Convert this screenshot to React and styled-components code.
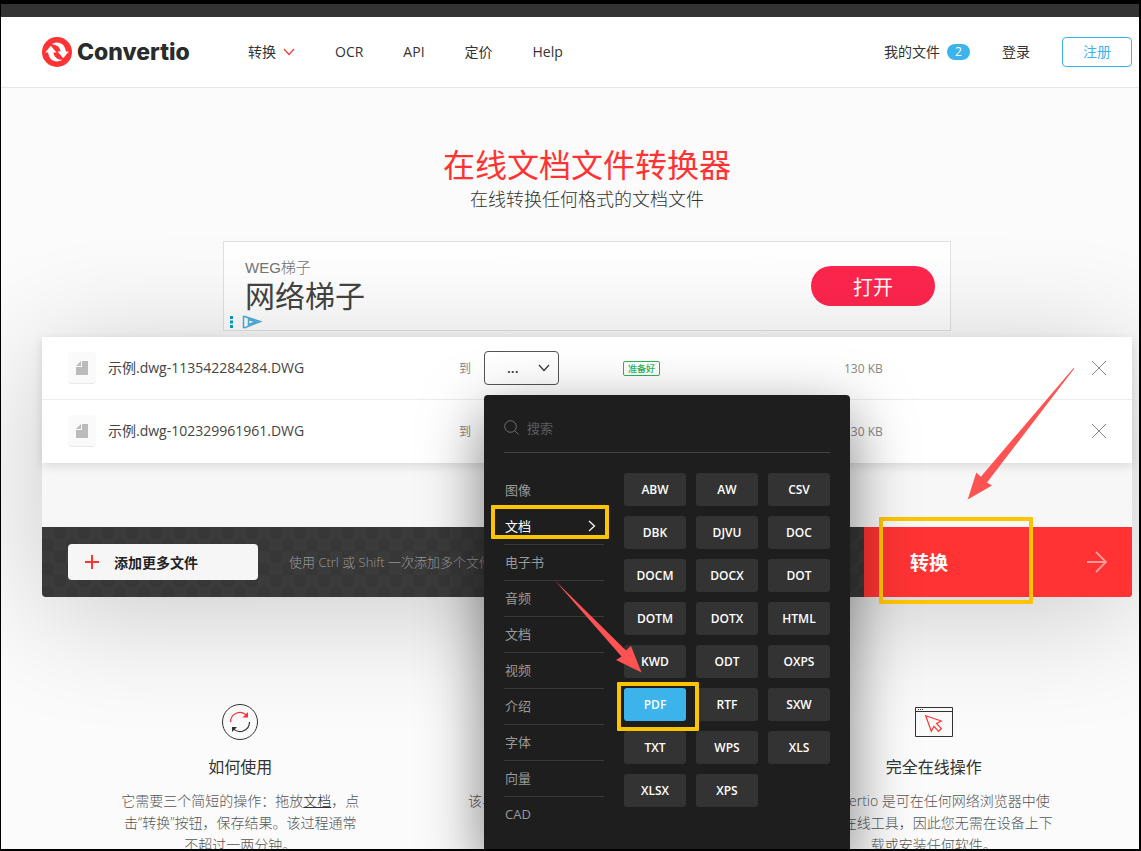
import { useState } from "react";
import styled, { createGlobalStyle } from "styled-components";

const colors = {
  red: "#ff3333",
  blue: "#3cb4eb",
  mark: "#ffc400",
  arrow: "#ff5353",
  dark: "#1e1e1e",
  text: "#333",
  green: "#2cb457",
};

const files = [
  { name: "示例.dwg-113542284284.DWG", size: "130 KB", status: "准备好" },
  { name: "示例.dwg-102329961961.DWG", size: "130 KB", status: "准备好" },
];

const categories = [
  "图像",
  "文档",
  "电子书",
  "音频",
  "文档",
  "视频",
  "介绍",
  "字体",
  "向量",
  "CAD",
];

const formats = [
  "ABW", "AW", "CSV",
  "DBK", "DJVU", "DOC",
  "DOCM", "DOCX", "DOT",
  "DOTM", "DOTX", "HTML",
  "KWD", "ODT", "OXPS",
  "PDF", "RTF", "SXW",
  "TXT", "WPS", "XLS",
  "XLSX", "XPS",
];

const Chevron = () => (
  <svg width="12" height="8" viewBox="0 0 12 8" fill="none" stroke="currentColor" strokeWidth="1.200">
    <path d="M1 1l5 5.500L11 1" />
  </svg>
);

const LogoMark = () => (
  <svg width="30" height="30" viewBox="0 0 30 30">
    <circle cx="15" cy="15" r="15" fill={colors.red} />
    <g fill="#fff">
      <path d="M8.800 8.800L3.200 15.400h3C6.400 20.500 10 24.400 15 24.400c2 0 3.800-.6 5.200-1.600C15.500 22.500 11.800 20 11.500 15.400h3z" />
      <path d="M21.200 21.200L26.800 14.600h-3C23.600 9.500 20 5.600 15 5.600c-2 0-3.800.6-5.200 1.600C14.500 7.500 18.200 10 18.500 14.600h-3z" />
    </g>
  </svg>
);

const DocIcon = () => (
  <svg width="12" height="14" viewBox="0 0 12 14" fill="#bbb">
    <path d="M6 0h6v14H0V6h6z" />
    <path d="M5 0v5H0z" />
  </svg>
);

const CloseIcon = () => (
  <svg width="14" height="14" viewBox="0 0 14 14" stroke="#888" fill="none">
    <path d="M0 0l14 14M14 0L0 14" />
  </svg>
);

const SearchIcon = () => (
  <svg width="15" height="15" viewBox="0 0 15 15" stroke="#6e6e6e" fill="none">
    <circle cx="6.500" cy="6.500" r="5.800" />
    <path d="M10.700 10.700l3.800 3.800" />
  </svg>
);

const FilesMenu = () => {
  const [category, setCategory] = useState(1);
  const [format, setFormat] = useState("PDF");

  return (
    <Menu>
      <SearchLabel>
        <SearchIcon />
        <SearchInput type="text" placeholder="搜索" aria-label="搜索" />
      </SearchLabel>
      <MenuBody>
        <CategoryList>
          {categories.map((c, i) => (
            <li key={i}>
              <Category active={i === category ? 1 : 0} onClick={() => setCategory(i)}>
                {c}
                {i === category && (
                  <svg width="8" height="12" viewBox="0 0 8 12" fill="none" stroke="#fff" strokeWidth="1.200">
                    <path d="M1 1l5.500 5L1 11" />
                  </svg>
                )}
                {i === 1 && <CategoryMark />}
              </Category>
            </li>
          ))}
        </CategoryList>
        <FormatGrid>
          {formats.map((f) => (
            <Format key={f} active={f === format ? 1 : 0} onClick={() => setFormat(f)}>
              {f}
              {f === "PDF" && (
                <>
                  <FormatMark />
                  <FormatArrow width="88" height="93" viewBox="0 0 88 93" fill={colors.arrow}>
                    <path d="M.5 0L72 70.500 77 66l10.500 26.500L62 80l5.500-3.500z" />
                  </FormatArrow>
                </>
              )}
            </Format>
          ))}
        </FormatGrid>
      </MenuBody>
    </Menu>
  );
};

const App = () => {
  return (
    <>
      <GlobalStyle />
      <Frame>
        <TopBar />
        <Header>
          <Logo href="#">
            <LogoMark />
            Convertio
          </Logo>
          <Nav>
            <NavLink href="#">
              转换
              <Red>
                <Chevron />
              </Red>
            </NavLink>
            <NavLink href="#">OCR</NavLink>
            <NavLink href="#">API</NavLink>
            <NavLink href="#">定价</NavLink>
            <NavLink href="#">Help</NavLink>
          </Nav>
          <Account>
            <NavLink href="#">
              我的文件
              <Count>2</Count>
            </NavLink>
            <NavLink href="#">登录</NavLink>
            <SignUp>注册</SignUp>
          </Account>
        </Header>

        <Main>
          <Title>在线文档文件转换器</Title>
          <Subtitle>在线转换任何格式的文档文件</Subtitle>

          <Ad>
            <div>
              <AdBrand>WEG梯子</AdBrand>
              <AdTitle>网络梯子</AdTitle>
            </div>
            <AdButton>打开</AdButton>
            <AdChoices width="34" height="14" viewBox="0 0 34 14">
              <path fill="#00a0c4" d="M2 1h3v3H2zM2 5.500h3v3H2zM2 10h3v3H2z" />
              <path
                fill="none"
                stroke="#4aaee0"
                strokeWidth="1.500"
                d="M18.500 1.500h-3v11h3M16.500 1.500L32.500 6.500l-14 5.500M20.500 4.500v5l7.500-2.700z"
              />
            </AdChoices>
          </Ad>

          <Card>
            <FileTable>
              <colgroup>
                <col />
                <col width="25" />
                <col width="139" />
                <col width="221" />
                <col width="248" />
                <col width="40" />
              </colgroup>
              <tbody>
                {files.map((file, i) => (
                  <tr key={file.name}>
                    <td>
                      <FileName>
                        <FileTile>
                          <DocIcon />
                        </FileTile>
                        <span>{file.name}</span>
                      </FileName>
                    </td>
                    <Muted>到</Muted>
                    <td>
                      <Picker>
                        <PickerButton aria-haspopup="true" aria-expanded={i === 0}>
                          <span>...</span>
                          <Chevron />
                        </PickerButton>
                        {i === 0 && <FilesMenu />}
                      </Picker>
                    </td>
                    <td>
                      <Status>{file.status}</Status>
                    </td>
                    <Muted>{file.size}</Muted>
                    <td>
                      <IconButton aria-label="删除">
                        <CloseIcon />
                      </IconButton>
                    </td>
                  </tr>
                ))}
              </tbody>
            </FileTable>
            <ActionBar>
              <AddButton>
                <svg width="14" height="14" viewBox="0 0 14 14" stroke={colors.red} strokeWidth="2">
                  <path d="M7 0v14M0 7h14" />
                </svg>
                添加更多文件
              </AddButton>
              <Hint>使用 Ctrl 或 Shift 一次添加多个文件</Hint>
              <ConvertButton>
                转换
                <svg width="20" height="22" viewBox="0 0 20 22" fill="none" stroke="#ff9c9c" strokeWidth="1.800">
                  <path d="M0 11h19M9 1l10 10L9 21" />
                </svg>
                <ConvertMark />
                <ConvertArrow width="108" height="132" viewBox="0 0 108 132" fill={colors.arrow}>
                  <path d="M106.500 0L107.300.5 20 114.500l5 3L.7 131.500 9.300 104.500l4.500 4.200z" />
                </ConvertArrow>
              </ConvertButton>
            </ActionBar>
          </Card>

          <Features>
            <Feature>
              <svg width="36" height="36" viewBox="0 0 36 36" fill="none">
                <circle cx="18" cy="18" r="17.500" stroke="#333" />
                <path d="M8.500 18a9.500 9.500 0 0 1 16-6.900" stroke={colors.red} strokeWidth="1.200" />
                <path d="M26 8v5.500h-5.500z" fill={colors.red} />
                <path d="M27.500 18a9.500 9.500 0 0 1-16 6.900" stroke="#333" strokeWidth="1.200" />
                <path d="M10 28v-5h5z" fill="#333" />
              </svg>
              <h2>如何使用</h2>
              <p>
                它需要三个简短的操作：拖放<a href="#">文档</a>，点
                <br />
                击“转换”按钮，保存结果。该过程通常
                <br />
                不超过一两分钟。
              </p>
            </Feature>
            <Feature>
              <svg width="36" height="36" viewBox="0 0 36 36" fill="none" stroke="#333">
                <path d="M4.500 4.500h27v27h-27z" />
              </svg>
              <h2>方便的界面</h2>
              <p>
                该界面支持拖放操作，让文件转换更快
                <br />
                更简单，无需任何设置
                <br />
                即可开始。
              </p>
            </Feature>
            <Feature>
              <svg width="38" height="36" viewBox="0 0 38 36" fill="none">
                <path d="M.5 3.500h37v29H.5zM.5 7.500h37" stroke="#333" />
                <path d="M3 5h1v1H3zM5 5h1v1H5zM7 5h1v1H7z" fill="#333" />
                <path
                  d="M10.700 11.700L26.300 17l-4.800 2.500 4.800 5.200-2.800 2.600-4.500-5-2.700 5z"
                  stroke={colors.red}
                  strokeWidth="1.200"
                />
              </svg>
              <h2>完全在线操作</h2>
              <p>
                Convertio 是可在任何网络浏览器中使
                <br />
                用的在线工具，因此您无需在设备上下
                <br />
                载或安装任何软件。
              </p>
            </Feature>
          </Features>
        </Main>
      </Frame>
    </>
  );
};

const GlobalStyle = createGlobalStyle`
  * {
    box-sizing: border-box;
  }
  body {
    margin: 0;
    color: ${colors.text};
    font-family: "Open Sans", "Noto Sans CJK SC", sans-serif;
    font-size: 14px;
  }
  button, input {
    font-family: inherit;
    font-size: inherit;
  }
  button {
    cursor: pointer;
  }
  svg {
    display: block;
    flex: none;
  }
`;

const Frame = styled.div`
  height: 100vh;
  overflow: hidden;
  border: solid #000;
  border-width: 4px 2px 2px 1px;
  background: #fbfbfb;
`;

const TopBar = styled.div`
  height: 13px;
  background: #333;
`;

const Header = styled.header`
  display: flex;
  align-items: center;
  height: 71px;
  padding: 0 7px 0 41px;
  background: #fff;
  border-bottom: 1px solid #e6e6e6;
`;

const Logo = styled.a`
  display: flex;
  align-items: center;
  gap: 5px;
  width: 206px;
  font-family: Inter, sans-serif;
  font-size: 23px;
  font-weight: 800;
  line-height: 30px;
  color: #282c2b;
  text-decoration: none;
`;

const Nav = styled.nav`
  display: flex;
  gap: 40px;
`;

const NavLink = styled.a`
  display: flex;
  align-items: center;
  gap: 7px;
  line-height: 20px;
  color: ${colors.text};
  text-decoration: none;
`;

const Red = styled.span`
  color: ${colors.red};
`;

const Account = styled.div`
  display: flex;
  align-items: center;
  gap: 32px;
  margin-left: auto;
`;

const Count = styled.span`
  width: 23px;
  border-radius: 8px;
  background: ${colors.blue};
  color: #fff;
  font-size: 12px;
  line-height: 16px;
  text-align: center;
`;

const SignUp = styled.button`
  width: 70px;
  height: 30px;
  padding: 0 0 2px;
  border: 1px solid ${colors.blue};
  border-radius: 4px;
  background: #fff;
  color: ${colors.blue};
`;

const Main = styled.main`
  padding: 57px 7px 0 41px;
`;

const Title = styled.h1`
  margin: 0;
  color: ${colors.red};
  font-size: 32px;
  font-weight: 400;
  line-height: 40px;
  text-align: center;
`;

const Subtitle = styled.p`
  margin: 2px 0 30px;
  font-size: 18px;
  font-weight: 300;
  line-height: 24px;
  text-align: center;
`;

const Ad = styled.aside`
  position: relative;
  display: flex;
  align-items: center;
  justify-content: space-between;
  max-width: 728px;
  height: 90px;
  margin: 0 auto 6px;
  padding: 0 15px 0 21px;
  border: 1px solid #e2e2e2;
  background: #fff;
`;

const AdBrand = styled.div`
  color: #757575;
  font-family: "Liberation Sans", "Noto Sans CJK SC", sans-serif;
  font-size: 15px;
  font-weight: 300;
  line-height: 20px;
`;

const AdTitle = styled.div`
  color: #444;
  font-size: 30px;
  line-height: 36px;
`;

const AdButton = styled.button`
  width: 124px;
  height: 40px;
  border: 0;
  border-radius: 20px;
  background: #ff264e;
  color: #fff;
  font-size: 20px;
`;

const AdChoices = styled.svg`
  position: absolute;
  bottom: 1px;
  left: 4px;
`;

const Card = styled.section`
  position: relative;
  border-radius: 4px;
  background: #f7f7f7;
  box-shadow: 0 15px 120px rgba(0, 0, 0, 0.2);
`;

const FileTable = styled.table`
  width: 100%;
  table-layout: fixed;
  border-spacing: 0;
  background: #fff;
  box-shadow: 0 3px 10px rgba(0, 0, 0, 0.12);

  td {
    height: 63px;
    padding: 0;
    border-bottom: 1px solid #ececec;
  }
  tr:last-child td {
    border-color: #fff;
  }
`;

const FileName = styled.div`
  display: flex;
  align-items: center;
  gap: 12px;
  padding-left: 26px;
  color: #444;

  span:last-child {
    padding-bottom: 2px;
  }
`;

const FileTile = styled.span`
  display: flex;
  align-items: center;
  justify-content: center;
  width: 28px;
  height: 32px;
  border-bottom: 1px solid #e8e8e8;
  border-radius: 4px;
  background: #fafafa;
`;

const Muted = styled.td`
  color: #888;
  font-size: 12px;
`;

const Picker = styled.div`
  position: relative;
`;

const PickerButton = styled.button`
  display: flex;
  align-items: center;
  justify-content: space-between;
  width: 75px;
  height: 34px;
  padding: 0 8px 0 22px;
  border: 1px solid #555;
  border-radius: 4px;
  background: #fff;
  color: ${colors.text};
  font-weight: 600;

  span {
    padding-bottom: 2px;
  }
`;

const Status = styled.span`
  display: block;
  width: 37px;
  border: 1px solid ${colors.green};
  border-radius: 2px;
  color: ${colors.green};
  font-size: 9px;
  font-weight: 500;
  line-height: 13px;
  text-align: center;
`;

const IconButton = styled.button`
  display: flex;
  padding: 0;
  border: 0;
  background: none;
`;

const Menu = styled.div`
  position: absolute;
  z-index: 10;
  top: 44px;
  left: 0;
  width: 366px;
  padding: 0 20px 20px;
  border-radius: 4px;
  background: ${colors.dark};
  box-shadow: 0 20px 60px rgba(0, 0, 0, 0.5);
`;

const SearchLabel = styled.label`
  display: flex;
  align-items: center;
  gap: 8px;
  height: 58px;
  padding-top: 8px;
  border-bottom: 1px solid #444;
`;

const SearchInput = styled.input`
  flex: 1;
  min-width: 0;
  padding: 0;
  border: 0;
  outline: 0;
  background: none;
  color: #fff;
  font-size: 13px;

  &::placeholder {
    color: #5c5c5c;
  }
`;

const MenuBody = styled.div`
  display: grid;
  grid-template-columns: 100px 1fr;
  gap: 20px;
  align-items: start;
  padding-top: 20px;
`;

const CategoryList = styled.ul`
  margin: 0;
  padding: 0;
  list-style: none;

  li {
    height: 36px;
    border-bottom: 1px solid #3a3a3a;
  }
  li:last-child {
    border-bottom: 0;
  }
`;

const Category = styled.button`
  position: relative;
  display: flex;
  align-items: center;
  justify-content: space-between;
  width: 100%;
  height: 35px;
  padding: 0 8px 2px 1px;
  border: 0;
  background: none;
  color: ${(props) => (props.active ? "#fff" : "#999")};
  font-size: 13px;
`;

const FormatGrid = styled.div`
  display: grid;
  grid-template-columns: repeat(3, 1fr);
  gap: 10px;
`;

const Format = styled.button`
  position: relative;
  z-index: ${(props) => (props.active ? 1 : 0)};
  height: 33px;
  padding: 0;
  border: 0;
  border-radius: 3px;
  background: ${(props) => (props.active ? colors.blue : "#333")};
  color: #fff;
  font-size: 12px;
  font-weight: 600;
`;

/* marker frames and arrows drawn over the page */
const Mark = styled.span`
  position: absolute;
  z-index: 1;
  border: 4px solid ${colors.mark};
  border-radius: 1px;
  pointer-events: none;
`;

const CategoryMark = styled(Mark)`
  top: -4px;
  left: -13px;
  width: 118px;
  height: 34px;
`;

const FormatMark = styled(Mark)`
  top: -6px;
  left: -7px;
  width: 82px;
  height: 49px;
`;

const ConvertMark = styled(Mark)`
  top: -10px;
  left: 15px;
  width: 154px;
  height: 87px;
`;

const Arrow = styled.svg`
  position: absolute;
  z-index: 1;
  pointer-events: none;
`;

const FormatArrow = styled(Arrow)`
  top: -108px;
  left: -70px;
`;

const ConvertArrow = styled(Arrow)`
  top: -159px;
  left: 103px;
`;

const ActionBar = styled.div`
  display: flex;
  align-items: center;
  height: 70px;
  margin-top: 64px;
  padding-left: 26px;
  border-radius: 0 0 4px 4px;
  background: repeating-conic-gradient(#373737 0 25%, #3b3b3b 0 50%) 0 0 / 24px 24px;
`;

const AddButton = styled.button`
  display: flex;
  align-items: center;
  gap: 15px;
  width: 190px;
  height: 36px;
  padding: 0 17px;
  border: 0;
  border-radius: 4px;
  background: #f6f6f6;
  color: #222;
  font-weight: 700;
`;

const Hint = styled.span`
  margin-left: 31px;
  padding-bottom: 2px;
  color: #999;
  font-size: 13px;
  font-weight: 300;
`;

const ConvertButton = styled.button`
  position: relative;
  display: flex;
  align-items: center;
  justify-content: space-between;
  width: 268px;
  height: 70px;
  margin-left: auto;
  padding: 0 25px 0 46px;
  border: 0;
  border-radius: 0 0 4px 0;
  background: ${colors.red};
  color: #fff;
  font-size: 19px;
  font-weight: 700;
`;

const Features = styled.section`
  display: grid;
  grid-template-columns: repeat(3, 1fr);
  padding: 107px 25px 0;
`;

const Feature = styled.article`
  display: flex;
  flex-direction: column;
  align-items: center;
  text-align: center;

  h2 {
    margin: 15px 0 11px;
    font-size: 16px;
    font-weight: 400;
    line-height: 24px;
  }
  p {
    margin: 0;
    color: #555;
    font-weight: 300;
    line-height: 22px;
    white-space: nowrap;
  }
  a {
    color: #333;
  }
`;

export default App;
